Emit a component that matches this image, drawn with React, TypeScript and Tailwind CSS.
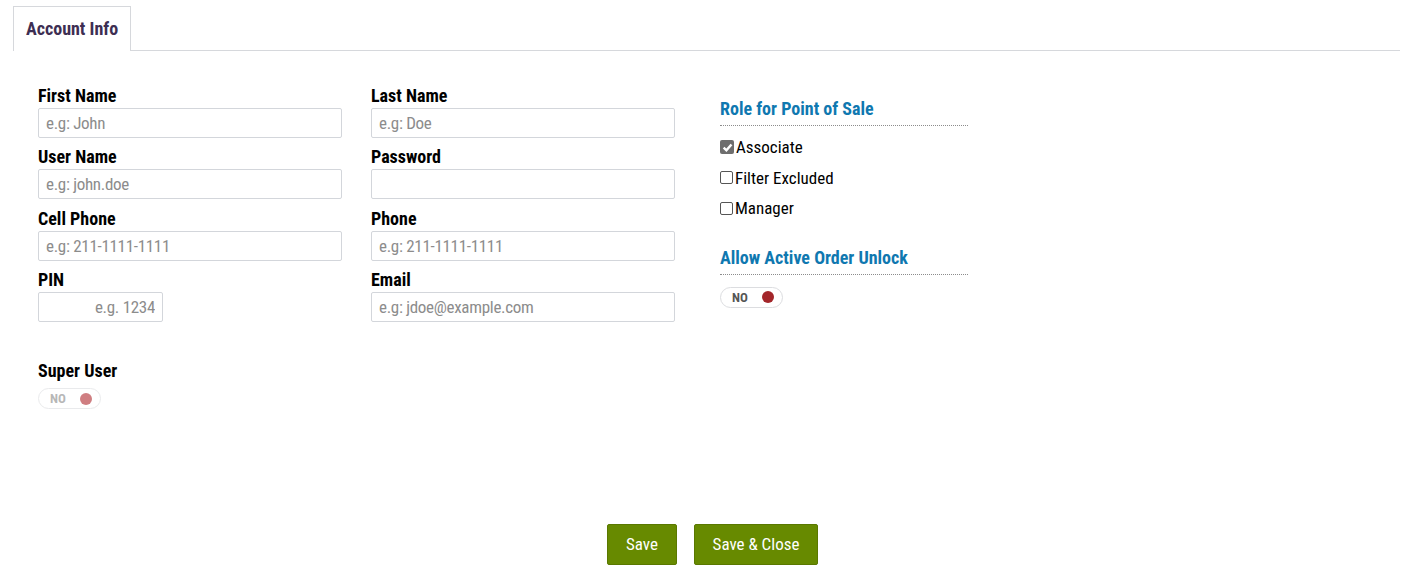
import React, { useState } from "react";

const Field = ({ label, placeholder, className = "", inputClass = "" }: { label: string; placeholder?: string; className?: string; inputClass?: string }) => (
  <div className={`flex flex-col ${className}`}>
    <label className="text-[18px] leading-[20px] font-bold text-black mb-[2px]">{label}</label>
    <input
      type="text"
      placeholder={placeholder}
      className={`h-[30px] border border-[#d3d6db] rounded-[2px] px-[7px] text-[17px] tracking-[-0.3px] text-[#333] placeholder:text-[#8c8c8c] outline-none ${inputClass}`}
    />
  </div>
);

const Toggle = ({ disabled }: { disabled?: boolean }) => (
  <div
    className={`w-[63px] h-[21px] rounded-full border border-[#dcdde0] bg-white flex items-center justify-between pl-[11px] pr-[8px] ${disabled ? "opacity-60" : ""}`}
  >
    <span className={`text-[13px] font-bold leading-none ${disabled ? "text-[#888]" : "text-[#555]"}`}>NO</span>
    <span className={`w-[12px] h-[12px] rounded-full ${disabled ? "bg-[#b02a2f]" : "bg-[#a3262a]"}`} />
  </div>
);

const Check = ({ label, checked }: { label: string; checked?: boolean }) => (
  <div className="flex items-center h-[30.5px]">
    {checked ? (
      <span className="w-[14px] h-[14px] rounded-[2px] bg-[#6e6e6e] flex items-center justify-center">
        <svg width="11" height="11" viewBox="0 0 10 10">
          <path d="M1.5 5.2 L4 7.6 L8.6 2.2" stroke="white" strokeWidth="2.2" fill="none" />
        </svg>
      </span>
    ) : (
      <span className="w-[13px] h-[13px] rounded-[2px] border border-[#555] bg-white" />
    )}
    <span className="text-[17px] leading-[20px] text-black ml-[2px]">{label}</span>
  </div>
);

const SectionTitle = ({ children }: { children: React.ReactNode }) => (
  <h3 className="text-[18px] leading-[20px] font-bold text-[#0f78b0] pb-[6px] border-b border-dotted border-[#8c8c8c]">
    {children}
  </h3>
);

export default function App() {
  const [tab] = useState("account");

  return (
    <div className="w-[1413px] h-[571px] bg-white px-[13px] pt-[6px] font-['Roboto_Condensed','Roboto',sans-serif] font-stretch-condensed">
      {/* tabs */}
      <div className="flex">
        <div className="w-[118px] h-[45px] border border-b-0 border-[#d6d8dc] flex items-center justify-center bg-white">
          <span className="text-[18px] font-bold text-[#3d2e52] pb-[2px]">{tab === "account" ? "Account Info" : ""}</span>
        </div>
        <div className="flex-1 border-b border-[#d6d8dc]" />
      </div>

      <div className="pl-[25px] pt-[35px] flex">
        <div className="grid grid-cols-[304px_304px] gap-x-[29px] gap-y-[9.33px] content-start">
          <Field label="First Name" placeholder="e.g: John" />
          <Field label="Last Name" placeholder="e.g: Doe" />
          <Field label="User Name" placeholder="e.g: john.doe" />
          <Field label="Password" />
          <Field label="Cell Phone" placeholder="e.g: 211-1111-1111" />
          <Field label="Phone" placeholder="e.g: 211-1111-1111" />
          <Field label="PIN" placeholder="e.g. 1234" inputClass="w-[125px] text-right" />
          <Field label="Email" placeholder="e.g: jdoe@example.com" />
          <div className="col-span-2 mt-[30px]">
            <div className="text-[18px] leading-[20px] font-bold text-black">Super User</div>
            <div className="mt-[7px]">
              <Toggle disabled />
            </div>
          </div>
        </div>

        <div className="ml-[45px] w-[248px] pt-[13px]">
          <SectionTitle>Role for Point of Sale</SectionTitle>
          <div className="pt-[6px]">
            <Check label="Associate" checked />
            <Check label="Filter Excluded" />
            <Check label="Manager" />
          </div>
          <div className="mt-[24px]">
            <SectionTitle>Allow Active Order Unlock</SectionTitle>
            <div className="mt-[12px]">
              <Toggle />
            </div>
          </div>
        </div>
      </div>

      <div className="flex justify-center gap-[17px] mt-[115px] pl-[12px]">
        <button className="w-[70px] h-[41px] bg-[#678a00] border border-[#5a7800] text-white text-[17px] rounded-[2px]">Save</button>
        <button className="w-[124px] h-[41px] bg-[#678a00] border border-[#5a7800] text-white text-[17px] rounded-[2px]">Save &amp; Close</button>
      </div>
    </div>
  );
}
